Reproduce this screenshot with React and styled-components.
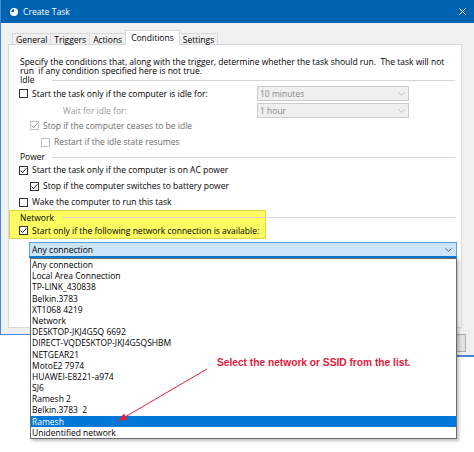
import React from "react";
import styled, { createGlobalStyle } from "styled-components";

const GlobalStyle = createGlobalStyle`
  html, body { margin: 0; padding: 0; background: #ffffff; }
  body {
    font-family: "Open Sans", "Noto Sans", sans-serif;
    font-size: 8.5px;
    color: #000000;
  }
  * { box-sizing: border-box; }
`;

const Page = styled.div`
  position: relative;
  width: 474px;
  height: 452px;
  overflow: hidden;
  background: #ffffff;
`;

const Window = styled.div`
  border-left: 1px solid #4a8ad0;
  border-bottom: 1px solid #4a8ad0;
  background: #f0f0f0;
`;

const TitleBar = styled.div`
  height: 23px;
  background: #0063b1;
  color: #ffffff;
  display: flex;
  align-items: center;
  gap: 5px;
  padding: 0 8px 0 9px;
  font-size: 8.6px;
`;

const TitleText = styled.span`
  flex: 1;
  line-height: 12px;
`;

const Body = styled.div`
  padding: 7px 12px 6px 7px;
`;

const TabsRow = styled.div`
  display: flex;
  align-items: flex-end;
  height: 15px;
  padding-left: 4px;
  margin-bottom: -1px;
  position: relative;
  z-index: 1;
`;

const Tab = styled.div`
  height: ${(p) => (p.$active ? 15 : 12)}px;
  line-height: ${(p) => (p.$active ? 13 : 11)}px;
  padding: 0 ${(p) => (p.$active ? 5 : 3)}px;
  margin: 0 ${(p) => (p.$active ? -1 : -1)}px 0 0;
  border: 1px solid #d9d9d9;
  border-bottom: ${(p) => (p.$active ? "none" : "1px solid #d9d9d9")};
  background: ${(p) => (p.$active ? "#ffffff" : "#f0f0f0")};
  position: relative;
  z-index: ${(p) => (p.$active ? 2 : 1)};
  white-space: nowrap;
`;

const Panel = styled.div`
  height: 284px;
  background: #ffffff;
  border: 1px solid #d9d9d9;
  padding: 12px 0 0 10px;
`;

const Desc = styled.div`
  line-height: 9px;
  padding-left: 1px;
  white-space: pre;
`;

const Header = styled.div`
  display: flex;
  align-items: center;
  height: ${(p) => p.$h}px;
  padding-left: 1px;
  margin-right: 6px;
  position: relative;
`;

const HeaderLabel = styled.span`
  width: ${(p) => p.$w}px;
  line-height: 10px;
`;

const HeaderLine = styled.div`
  flex: 1;
  height: 1px;
  background: #d6d6d6;
`;

const Row = styled.div`
  display: flex;
  align-items: center;
  height: ${(p) => p.$h}px;
  padding-left: ${(p) => p.$indent || 0}px;
  color: ${(p) => p.$color || "#000000"};
  position: relative;
  white-space: nowrap;
`;

const Box = styled.span`
  width: 9px;
  height: 9px;
  flex: none;
  border: 1px solid ${(p) => (p.$disabled ? "#c2c2c2" : "#333333")};
  background: #ffffff;
  margin-right: 4px;
  display: flex;
  align-items: center;
  justify-content: center;
`;

const Label = styled.span`
  flex: 1;
  line-height: 10px;
`;

const DisabledCombo = styled.div`
  width: 152px;
  height: 15px;
  margin-right: 52px;
  flex: none;
  border: 1px solid #cccccc;
  background: #efefef;
  color: #8a8a8a;
  display: flex;
  align-items: center;
  padding: 0 3px 0 2px;
`;

const ComboText = styled.span`
  flex: 1;
  line-height: 10px;
`;

const NetworkSection = styled.div`
  position: relative;
`;

const Highlight = styled.div`
  position: absolute;
  left: -10px;
  top: 0;
  width: 257px;
  height: 29px;
  background: #fdfd62;
  border: 1px solid #dcd64a;
  z-index: 0;
`;

const ComboWrap = styled.div`
  position: relative;
  margin: 6px 4px 0 10px;
  z-index: 5;
`;

const OpenCombo = styled.div`
  height: 16px;
  border: 1px solid #5a9fe0;
  border-bottom: 2px solid #0078d7;
  background: #cce4f7;
  display: flex;
  align-items: center;
  padding: 0 4px 0 2px;
`;

const List = styled.div`
  position: absolute;
  top: 100%;
  left: 1px;
  width: 427px;
  background: #ffffff;
  border: 1px solid #6a6a6a;
  box-shadow: 2px 2px 3px rgba(0, 0, 0, 0.25);
`;

const Item = styled.div`
  height: 11.2px;
  line-height: 11.2px;
  padding-left: 1px;
  white-space: pre;
  background: ${(p) => (p.$selected ? "#0078d7" : "transparent")};
  color: ${(p) => (p.$selected ? "#ffffff" : "#000000")};
`;

const Note = styled.div`
  position: absolute;
  left: 186px;
  top: 98px;
  font-family: "Liberation Sans", Arial, sans-serif;
  font-weight: bold;
  font-size: 10.2px;
  line-height: 12px;
  color: #e21b3c;
  white-space: nowrap;
`;

const ArrowSvg = styled.svg`
  position: absolute;
  left: 0;
  top: 0;
  pointer-events: none;
`;

const Footer = styled.div`
  display: flex;
  justify-content: flex-end;
  margin-top: -2px;
`;

const FooterStub = styled.div`
  width: 17px;
  height: 24px;
  background: #f0f0f0;
  border-bottom: 2px solid #4a8ad0;
  padding-top: 1px;
`;

const StubButton = styled.div`
  width: 9px;
  height: 18px;
  background: #e1e1e1;
  border: 1px solid #adadad;
  border-left: none;
`;

const Check = ({ disabled }) => (
  <svg width="7" height="7" viewBox="0 0 7 7">
    <path
      d="M0.6 3.6 L2.6 5.6 L6.4 1.2"
      fill="none"
      stroke={disabled ? "#9a9a9a" : "#222222"}
      strokeWidth="1"
    />
  </svg>
);

const Checkbox = ({ checked, disabled }) => (
  <Box $disabled={disabled}>{checked && <Check disabled={disabled} />}</Box>
);

const Chevron = ({ color }) => (
  <svg width="7" height="4" viewBox="0 0 7 4">
    <path d="M0.5 0.5 L3.5 3.3 L6.5 0.5" fill="none" stroke={color} strokeWidth="0.9" />
  </svg>
);

const ClockIcon = () => (
  <svg width="8" height="8" viewBox="0 0 8 8">
    <circle cx="4" cy="4" r="4" fill="#ffffff" />
    <path d="M4 4 L4 1.3 A2.7 2.7 0 0 0 1.3 4 Z" fill="#1d5f9e" />
  </svg>
);

const CloseIcon = () => (
  <svg width="7" height="7" viewBox="0 0 7 7">
    <path d="M0.5 0.5 L6.5 6.5 M6.5 0.5 L0.5 6.5" stroke="#ffffff" strokeWidth="1" />
  </svg>
);

const networks = [
  "Any connection",
  "Local Area Connection",
  "TP-LINK_430838",
  "Belkin.3783",
  "XT1068 4219",
  "Network",
  "DESKTOP-JKJ4G5Q 6692",
  "DIRECT-VQDESKTOP-JKJ4G5QSHBM",
  "NETGEAR21",
  "MotoE2 7974",
  "HUAWEI-E8221-a974",
  "SJ6",
  "Ramesh 2",
  "Belkin.3783  2",
  "Ramesh",
  "Unidentified network",
];

const tabs = ["General", "Triggers", "Actions", "Conditions", "Settings"];

export default function App() {
  return (
    <Page>
      <GlobalStyle />
      <Window>
        <TitleBar>
          <ClockIcon />
          <TitleText>Create Task</TitleText>
          <CloseIcon />
        </TitleBar>
        <Body>
          <TabsRow>
            {tabs.map((t) => (
              <Tab key={t} $active={t === "Conditions"}>
                {t}
              </Tab>
            ))}
          </TabsRow>
          <Panel>
            <Desc>
              {"Specify the conditions that, along with the trigger, determine whether the task should run.  The task will not\nrun  if any condition specified here is not true."}
            </Desc>
            <Header $h={10}>
              <HeaderLabel $w={32}>Idle</HeaderLabel>
              <HeaderLine />
            </Header>
            <Row $h={17}>
              <Checkbox />
              <Label>Start the task only if the computer is idle for:</Label>
              <DisabledCombo>
                <ComboText>10 minutes</ComboText>
                <Chevron color="#b4b4b4" />
              </DisabledCombo>
            </Row>
            <Row $h={17} $indent={44} $color="#9a9a9a">
              <Label>Wait for idle for:</Label>
              <DisabledCombo>
                <ComboText>1 hour</ComboText>
                <Chevron color="#b4b4b4" />
              </DisabledCombo>
            </Row>
            <Row $h={13} $indent={11} $color="#6d6d6d">
              <Checkbox checked disabled />
              <Label>Stop if the computer ceases to be idle</Label>
            </Row>
            <Row $h={20} $indent={22} $color="#6d6d6d">
              <Checkbox disabled />
              <Label>Restart if the idle state resumes</Label>
            </Row>
            <Header $h={10}>
              <HeaderLabel $w={32}>Power</HeaderLabel>
              <HeaderLine />
            </Header>
            <Row $h={16}>
              <Checkbox checked />
              <Label>Start the task only if the computer is on AC power</Label>
            </Row>
            <Row $h={16} $indent={11}>
              <Checkbox checked />
              <Label>Stop if the computer switches to battery power</Label>
            </Row>
            <Row $h={16}>
              <Checkbox />
              <Label>Wake the computer to run this task</Label>
            </Row>
            <NetworkSection>
              <Highlight />
              <Header $h={15}>
                <HeaderLabel $w={42}>Network</HeaderLabel>
                <HeaderLine />
              </Header>
              <Row $h={11}>
                <Checkbox checked />
                <Label>Start only if the following network connection is available:</Label>
              </Row>
            </NetworkSection>
            <ComboWrap>
              <OpenCombo>
                <ComboText>Any connection</ComboText>
                <Chevron color="#4a4a4a" />
              </OpenCombo>
              <List>
                {networks.map((n, i) => (
                  <Item key={i} $selected={i === 14}>
                    {n}
                  </Item>
                ))}
                <Note>Select the network or SSID from the list.</Note>
                <ArrowSvg width="427" height="182" viewBox="0 0 427 182">
                  <line x1="176" y1="110" x2="95" y2="157.4" stroke="#e0203a" strokeWidth="1" />
                  <polygon points="87,162 96.6,160.5 93,154.4" fill="#e0203a" />
                </ArrowSvg>
              </List>
            </ComboWrap>
          </Panel>
        </Body>
      </Window>
      <Footer>
        <FooterStub>
          <StubButton />
        </FooterStub>
      </Footer>
    </Page>
  );
}
